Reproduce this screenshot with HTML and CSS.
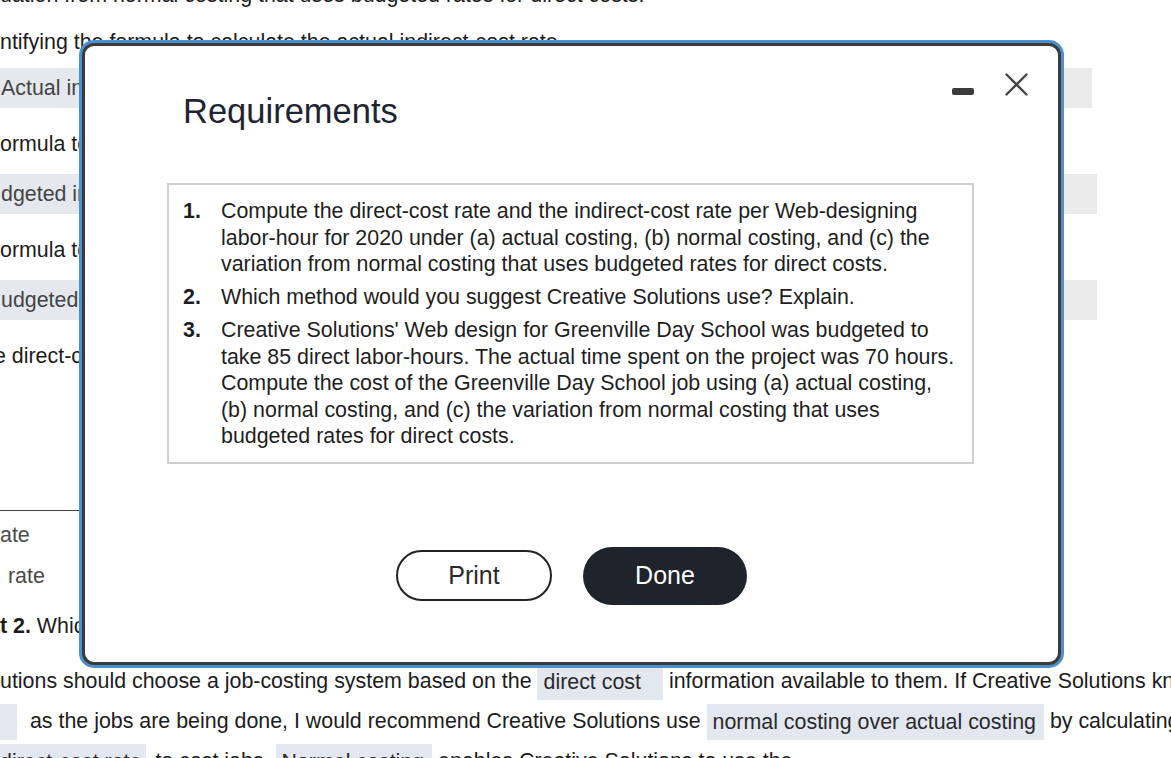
FILE: index.html
```html
<!DOCTYPE html>
<html lang="en">
<head>
    <meta charset="UTF-8">
    <meta name="viewport" content="width=device-width, initial-scale=1.0">
    <title>Requirements</title>
    <link rel="stylesheet" href="styles.css">
</head>
<body>
    <div class="sheet">
        <p class="line">uation from normal costing that uses budgeted rates for direct costs.</p>
        <p class="line prompt">ntifying the formula to calculate the actual indirect-cost rate</p>
        <div class="answer answer-short">
            <span class="fill">Actual indirect-cost rate</span>
            <span class="field"></span>
        </div>
        <p class="line prompt">ormula to calculate the budgeted indirect-cost rate</p>
        <div class="answer">
            <span class="fill">dgeted indirect-cost rate</span>
            <span class="field"></span>
        </div>
        <p class="line prompt">ormula to calculate the budgeted direct-cost rate</p>
        <div class="answer">
            <span class="fill">udgeted direct-cost rate</span>
            <span class="field"></span>
        </div>
        <p class="line prompt indent">e direct-cost rate and the indirect-cost rate for 2020.</p>

        <hr class="rule">
        <p class="line muted first">ate</p>
        <p class="line muted pad">rate</p>
        <p class="line req"><b>t 2.</b> Which method would you suggest Creative Solutions use? Explain.</p>

        <div class="answer-text">
            <p class="line">utions should choose a job-costing system based on the <span class="blank blank-wide">direct cost</span> information available to them. If Creative Solutions knew</p>
            <p class="line"><span class="blank blank-cut"></span> as the jobs are being done, I would recommend Creative Solutions use <span class="blank">normal costing over actual costing</span> by calculating</p>
            <p class="line shift"><span class="blank">direct-cost rate</span> to cost jobs. <span class="blank">Normal costing</span> enables Creative Solutions to use the</p>
        </div>
    </div>

    <div class="modal">
        <div class="modal-head">
            <h2 class="modal-title">Requirements</h2>
            <div class="win-ctrls">
                <svg class="ctrl-min" width="22" height="7" viewBox="0 0 22 7"><rect x="0" y="0" width="22" height="7" rx="2" fill="#3c3c3c"/></svg>
                <svg class="ctrl-close" width="23" height="23" viewBox="0 0 23 23"><path d="M1.5 1.5 L21.5 21.5 M21.5 1.5 L1.5 21.5" stroke="#454545" stroke-width="2.4" stroke-linecap="round" fill="none"/></svg>
            </div>
        </div>

        <ol class="req-list">
            <li><span class="num">1.</span><span>Compute the direct-cost rate and the indirect-cost rate per Web-designing labor-hour for 2020 under (a) actual costing, (b) normal costing, and (c) the variation from normal costing that uses budgeted rates for direct costs.</span></li>
            <li><span class="num">2.</span><span>Which method would you suggest Creative Solutions use? Explain.</span></li>
            <li><span class="num">3.</span><span>Creative Solutions' Web design for Greenville Day School was budgeted to take 85 direct labor-hours. The actual time spent on the project was 70 hours. Compute the cost of the Greenville Day School job using (a) actual costing, (b) normal costing, and (c) the variation from normal costing that uses budgeted rates for direct costs.</span></li>
        </ol>

        <div class="modal-actions">
            <button class="btn btn-outline">Print</button>
            <button class="btn btn-dark">Done</button>
        </div>
    </div>
</body>
</html>
```

FILE: styles.css
```css
html, body {
    height: 100%;
    overflow: hidden;
}

body {
    margin: 0;
    position: relative;
    background-color: #ffffff;
    color: #1c1c1c;
    font-family: 'Liberation Sans', Arial, sans-serif;
    font-size: 21.4px;
}

/* page behind the dialog */
.sheet {
    margin-top: -25px;
}

.line {
    margin: 0;
    height: 40px;
    line-height: 40px;
    white-space: nowrap;
}

.prompt {
    margin-top: 7px;
}

.indent {
    text-indent: -6px;
}

.answer {
    display: flex;
    width: 1097px;
    height: 40px;
    margin-top: 10px;
    margin-bottom: 16px;
    line-height: 40px;
}

.answer-short {
    width: 1092px;
    margin-top: 6px;
}

.fill {
    width: 340px;
    padding-left: 1px;
    background-color: #e5e8ef;
    color: #444444;
    white-space: nowrap;
}

.field {
    width: 200px;
    margin-left: auto;
    background-color: #ebebeb;
}

.rule {
    width: 80px;
    margin: 134px 0 0;
    border: none;
    border-top: 1px solid #444444;
}

.muted {
    color: #4a4a4a;
}

.first {
    margin-top: 4px;
}

.pad {
    padding-left: 8px;
    margin-top: 1px;
}

.req {
    margin-top: 10px;
}

.answer-text {
    margin-top: 15px;
}

.blank {
    display: inline-block;
    height: 36px;
    line-height: 36px;
    padding: 0 8px 0 6px;
    vertical-align: middle;
    background-color: #e3e7ef;
    color: #2a2a2a;
}

.blank-wide {
    padding-right: 22px;
}

.blank-cut {
    width: 3px;
    margin-right: 7px;
}

.shift {
    margin-left: -6px;
}

.shift .blank:first-child {
    padding-right: 5px;
    margin-right: 3px;
}

/* dialog */
.modal {
    position: absolute;
    left: 82px;
    top: 43px;
    width: 979px;
    height: 622px;
    box-sizing: border-box;
    border: 3px solid #3b3b3b;
    border-radius: 12px;
    background-color: #ffffff;
    box-shadow: 0 0 0 3px #4b8fcc;
}

.modal-head {
    display: flex;
    align-items: flex-start;
    padding: 27px 30px 0 98px;
}

.modal-title {
    flex: 1;
    margin: 18px 0 0;
    font-size: 34.5px;
    font-weight: normal;
    line-height: 40px;
    color: #1e2432;
}

.win-ctrls {
    display: flex;
    align-items: flex-end;
    gap: 31px;
}

.ctrl-min {
    margin-bottom: 1px;
}

.req-list {
    list-style: none;
    margin: 52px 84px 0 82px;
    padding: 13px 10px 12px 14px;
    border: 2px solid #cfcfcf;
    color: #1e1e1e;
    line-height: 26.5px;
}

.req-list li {
    display: flex;
}

.req-list li + li {
    margin-top: 6.5px;
}

.num {
    flex: none;
    width: 38px;
    font-weight: bold;
}

.modal-actions {
    display: flex;
    justify-content: center;
    align-items: center;
    gap: 31px;
    margin-top: 83px;
}

.btn {
    font-family: 'Liberation Sans', Arial, sans-serif;
    font-size: 25px;
    border-radius: 30px;
    cursor: pointer;
}

.btn-outline {
    width: 156px;
    height: 51px;
    border: 2px solid #222222;
    background-color: #ffffff;
    color: #2a2a2a;
}

.btn-dark {
    width: 164px;
    height: 58px;
    border: none;
    background-color: #1f232c;
    color: #ffffff;
}
```
